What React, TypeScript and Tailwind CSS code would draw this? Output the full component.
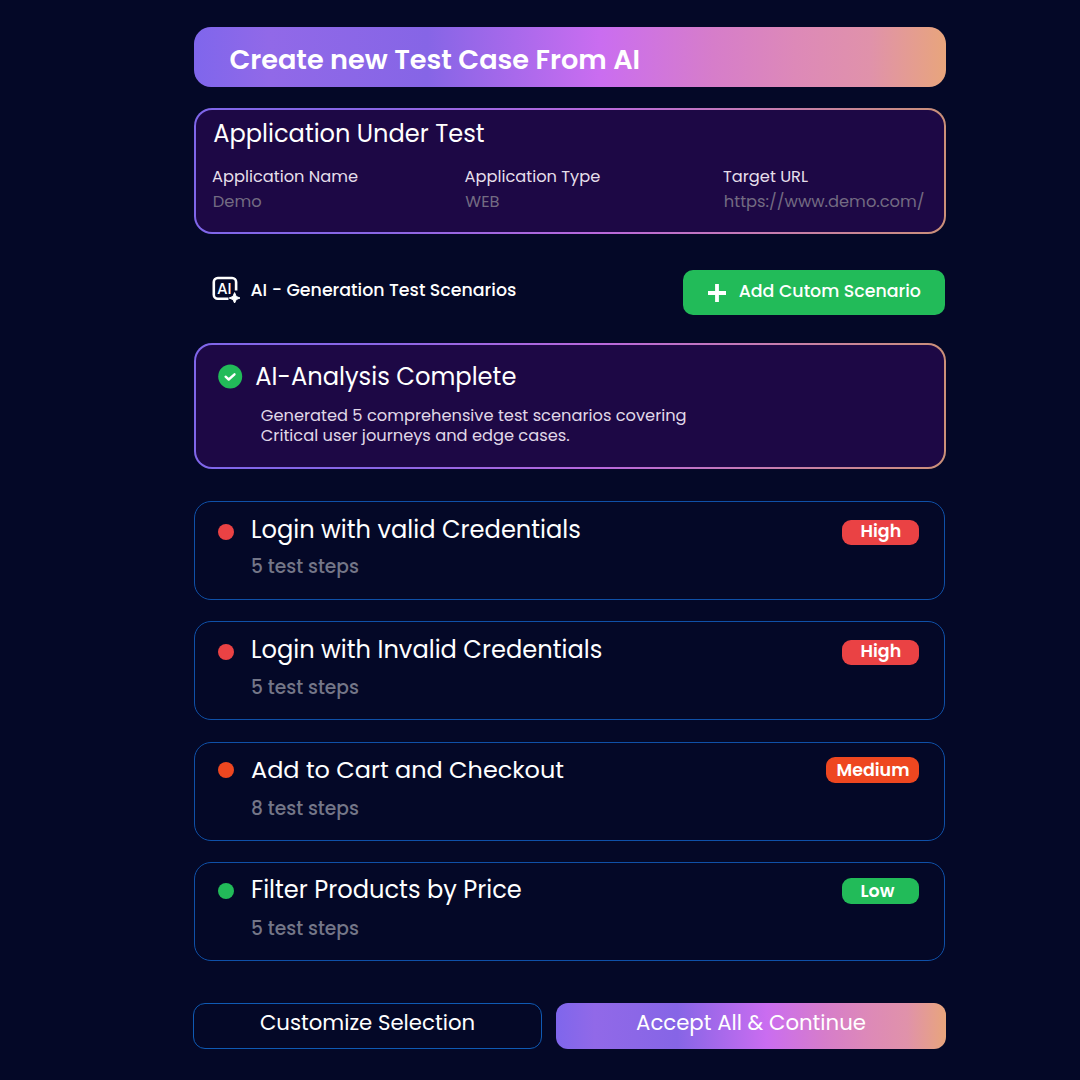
import React from "react";

type Scenario = {
  title: string;
  steps: string;
  priority: string;
  titleClass: string;
  stepsClass: string;
  dotClass: string;
  badgeClass: string;
};

const scenarios: Scenario[] = [
  {
    title: "Login with valid Credentials",
    steps: "5 test steps",
    priority: "High",
    titleClass: "mt-[9.6px] text-[24.15px]",
    stepsClass: "mt-[7.4px]",
    dotClass: "mt-[22px] bg-[#ea4244]",
    badgeClass: "mt-[18px] h-[25px] w-[77px] pl-[18.5px] leading-[23px] bg-[#ea4244]",
  },
  {
    title: "Login with Invalid Credentials",
    steps: "5 test steps",
    priority: "High",
    titleClass: "mt-[10px] text-[24.15px]",
    stepsClass: "mt-[8px]",
    dotClass: "mt-[22px] bg-[#ea4244]",
    badgeClass: "mt-[18px] h-[25px] w-[77px] pl-[18.5px] leading-[23px] bg-[#ea4244]",
  },
  {
    title: "Add to Cart and Checkout",
    steps: "8 test steps",
    priority: "Medium",
    titleClass: "mt-[9px] text-[23.95px]",
    stepsClass: "mt-[9px]",
    dotClass: "mt-[19px] bg-[#ee4720]",
    badgeClass: "mt-[14px] h-[26px] w-[93px] pl-[10.5px] leading-[27px] bg-[#ee4720]",
  },
  {
    title: "Filter Products by Price",
    steps: "5 test steps",
    priority: "Low",
    titleClass: "mt-[8.8px] text-[24.15px]",
    stepsClass: "mt-[9.2px]",
    dotClass: "mt-[20.5px] bg-[#22bb59]",
    badgeClass: "mt-[15px] h-[26px] w-[77px] pl-[18.5px] leading-[27px] bg-[#22bb59]",
  },
];

const gradient =
  "bg-[linear-gradient(90deg,#7f66ec_0%,#9169e8_10%,#8665e6_31%,#ca6df0_54%,#d67dca_69%,#dd89b8_80%,#e092aa_90%,#e8a57c_100%)]";

const gradientFrame =
  "border-2 border-transparent [background:linear-gradient(#1d0845,#1d0845)_padding-box,linear-gradient(90deg,#7f66ea_0%,#8a66e6_25%,#b968dc_54%,#c67bb4_75%,#cb9078_100%)_border-box]";

function AiIcon() {
  return (
    <svg width="30" height="29" viewBox="0 0 30 29" fill="none" aria-hidden="true">
      <path
        d="M17.5 24.7H6.8a4 4 0 0 1-4-4V8a4 4 0 0 1 4-4h14.3a4 4 0 0 1 4 4v8.6"
        stroke="#fff"
        strokeWidth="2.6"
      />
      <text x="6" y="19.6" fontSize="15" fontWeight="500" fill="#fff" textLength="14.6" lengthAdjust="spacingAndGlyphs">
        AI
      </text>
      <path d="M23.6 18.6 25.2 22.4 29 24 25.2 25.6 23.6 29 22 25.6 18.2 24 22 22.4Z" fill="#fff" stroke="#fff" strokeWidth="1" strokeLinejoin="round" />
    </svg>
  );
}

function Field({ label, value, className }: { label: string; value: string; className: string }) {
  return (
    <div className={className}>
      <div className="text-[16.25px] leading-[25px] text-[#e5dfea]">{label}</div>
      <div className="ml-[0.8px] text-[16.3px] leading-[25px] text-[#736b82]">{value}</div>
    </div>
  );
}

function ScenarioCard({ s }: { s: Scenario }) {
  return (
    <div className="flex h-[99px] items-start rounded-[17px] border border-[#0f50a8] pl-[23px] pr-[25px]">
      <span className={`h-4 w-4 shrink-0 rounded-full ${s.dotClass}`} />
      <div className="ml-[17px] flex-1">
        <div className={`leading-[36px] ${s.titleClass}`}>{s.title}</div>
        <div className={`text-[18.65px] leading-[24px] font-medium text-[#747688] ${s.stepsClass}`}>{s.steps}</div>
      </div>
      <span className={`rounded-[9px] text-[17.45px] font-semibold ${s.badgeClass}`}>{s.priority}</span>
    </div>
  );
}

export default function App() {
  return (
    <main className="h-[1080px] w-[1080px] overflow-hidden whitespace-nowrap bg-[#040827] pl-[194px] pt-[27px] font-['Poppins','Inter',sans-serif] text-white">
      <div className="flex w-[752px] flex-col">
        <header className={`h-[60px] rounded-[17px] pl-[35.4px] pt-[5px] ${gradient}`}>
          <h1 className="text-[27.15px] leading-[55px] font-semibold">Create new Test Case From AI</h1>
        </header>

        <section className={`mt-[21px] h-[126px] rounded-[18px] pl-4 pt-[6px] ${gradientFrame}`}>
          <h2 className="ml-[1.3px] text-[24.1px] leading-[36px]">Application Under Test</h2>
          <div className="mt-3 flex">
            <Field label="Application Name" value="Demo" className="w-[252.5px]" />
            <Field label="Application Type" value="WEB" className="w-[258.5px]" />
            <Field label="Target URL" value="https://www.demo.com/" className="flex-1" />
          </div>
        </section>

        <div className="mt-[36px] flex h-[45px] items-start justify-between pr-px">
          <div className="flex pl-[17px] pt-[4px]">
            <AiIcon />
            <h3 className="ml-[9.5px] text-[17.4px] leading-[32px] font-medium">AI - Generation Test Scenarios</h3>
          </div>
          <button className="flex h-[45px] w-[262px] items-center rounded-[10px] bg-[#22bb59] pl-[25px]">
            <svg width="18" height="18" viewBox="0 0 18 18" aria-hidden="true">
              <path d="M9 0v18M0 9h18" stroke="#fff" strokeWidth="3.8" />
            </svg>
            <span className="ml-[12.7px] -mt-[2px] text-[17.4px] leading-[43px] font-medium">Add Cutom Scenario</span>
          </button>
        </div>

        <section className={`mt-[28px] h-[126px] rounded-[18px] pl-[22px] pt-[13px] ${gradientFrame}`}>
          <div className="flex items-center">
            <svg className="-mt-px" width="25" height="25" viewBox="0 0 25 25" fill="none" aria-hidden="true">
              <circle cx="12.2" cy="12.5" r="12" fill="#22bb59" />
              <path d="m7.6 12.7 3.1 2.8 5.8-5.2" stroke="#fff" strokeWidth="2.4" strokeLinecap="round" strokeLinejoin="round" />
            </svg>
            <h2 className="ml-[12.3px] mt-px text-[24.2px] leading-[36px]">AI-Analysis Complete</h2>
          </div>
          <p className="ml-[42.8px] mt-[10.5px] text-[16.25px] leading-[20px] text-[#e0d8e8]">
            Generated 5 comprehensive test scenarios covering
            <br />
            Critical user journeys and edge cases.
          </p>
        </section>

        <div className="mt-8 flex w-[751px] flex-col gap-[21.3px]">
          {scenarios.map((s) => (
            <ScenarioCard key={s.title} s={s} />
          ))}
        </div>

        <footer className="-ml-px mt-[42px] flex h-[46px] justify-between text-[21.25px]">
          <button className="flex w-[349px] justify-center rounded-[12px] border border-[#0f5ab4] leading-[38px]">
            Customize Selection
          </button>
          <button className={`flex w-[390px] justify-center rounded-[12px] pt-px leading-[38px] ${gradient}`}>
            Accept All &amp; Continue
          </button>
        </footer>
      </div>
    </main>
  );
}
